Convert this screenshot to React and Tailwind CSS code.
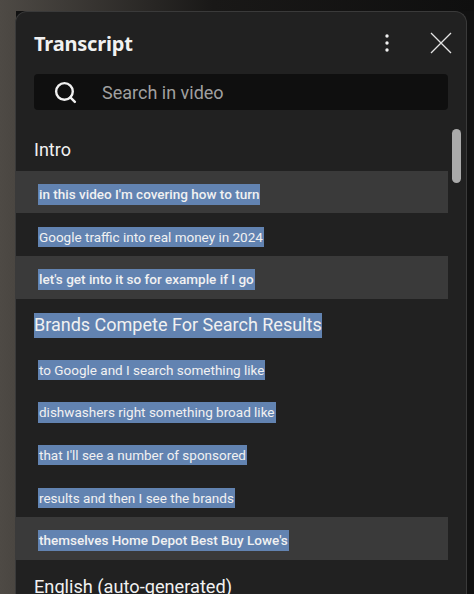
import { Search } from 'lucide-react'

const SECTIONS_TOP = [
  { text: "in this video I'm covering how to turn", active: true },
  { text: 'Google traffic into real money in 2024' },
  { text: "let's get into it so for example if I go", active: true },
]

const SECTIONS_BOTTOM = [
  { text: 'to Google and I search something like' },
  { text: 'dishwashers right something broad like' },
  { text: "that I'll see a number of sponsored" },
  { text: 'results and then I see the brands' },
  { text: "themselves Home Depot Best Buy Lowe's", active: true },
]

function Row({ text, active }) {
  return (
    <div className={`h-[42.7px] pl-[22px] pt-[13.5px] flex items-start ${active ? 'bg-[#3a3a3a]' : ''}`}>
      <span className={`bg-[#6283b1] text-[13.5px] leading-[20.5px] px-px text-[#f1f1f1] ${active ? 'font-medium' : ''}`}>{text}</span>
    </div>
  )
}

export default function App() {
  return (
    <div className="h-[594px] w-[474px] overflow-hidden bg-[linear-gradient(90deg,#4e4a45_0px,#4a4641_16px,#111111_16px)] font-['Roboto',sans-serif]">
      <div className="h-[11px] bg-[linear-gradient(90deg,#4e4a45,#191817_45%,#0f0f0f)]" />
      <div className="relative ml-[15px] h-[583px] w-[452px] overflow-hidden rounded-t-[12px] border border-b-0 border-[#3a3a3a] bg-[#212121]">
        <div className="flex h-[62px] items-center justify-between pl-[18px] pr-[14px]">
          <h1 className="pt-[2px] text-[20px] font-bold tracking-[-0.2px] text-[#f1f1f1] font-['Noto_Sans',sans-serif]">Transcript</h1>
          <div className="flex items-center gap-[40px]">
            <svg width="6" height="20" viewBox="0 0 6 20" fill="#f1f1f1">
              <circle cx="3" cy="3" r="1.7" />
              <circle cx="3" cy="10" r="1.7" />
              <circle cx="3" cy="17" r="1.7" />
            </svg>
            <svg width="22" height="22" viewBox="0 0 22 22" stroke="#e4e4e4" strokeWidth="1.3" fill="none">
              <path d="M1 1 L21 21 M21 1 L1 21" />
            </svg>
          </div>
        </div>
        <div className="ml-[18px] flex h-[36px] w-[414px] items-center rounded-[4px] bg-[#0f0f0f] pl-[19px]">
          <Search size={25} strokeWidth={2.3} className="text-[#f1f1f1]" />
          <span className="ml-[24px] text-[18px] text-[#a0a0a0]">Search in video</span>
        </div>
        <div className="w-[432px] pt-[17px]">
          <h2 className="h-[43.5px] pl-[18px] pt-[9px] text-[18px] leading-[28px] text-[#f1f1f1]">Intro</h2>
          {SECTIONS_TOP.map((row) => <Row key={row.text} {...row} />)}
          <div className="flex h-[47.5px] items-start pl-[18px] pt-[14.5px]">
            <span className="bg-[#6283b1] text-[18px] leading-[24.5px] text-[#f1f1f1]">Brands Compete For Search Results</span>
          </div>
          {SECTIONS_BOTTOM.map((row) => <Row key={row.text} {...row} />)}
          <h2 className="pl-[18px] pt-[15px] text-[18.2px] leading-[24px] text-[#f1f1f1]">English (auto-generated)</h2>
        </div>
        <div className="absolute right-[5px] top-[117px] h-[54px] w-[9px] rounded-full bg-[#aaaaaa]" />
      </div>
    </div>
  )
}
